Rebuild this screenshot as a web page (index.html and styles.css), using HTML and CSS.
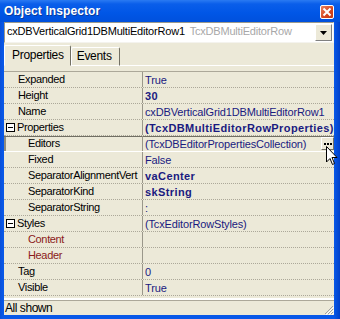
FILE: index.html
```html
<!DOCTYPE html>
<html lang="en">
<head>
    <meta charset="UTF-8">
    <title>Object Inspector</title>
    <link rel="stylesheet" href="styles.css">
</head>
<body>

<div class="window">
    <div class="titlebar">
        <span class="title">Object Inspector</span>
        <span class="close-btn">
            <svg width="10" height="10" viewBox="0 0 10 10"><path d="M1.5 1.5 L8.5 8.5 M8.5 1.5 L1.5 8.5" stroke="#fff" stroke-width="2"/></svg>
        </span>
    </div>

    <div class="client">
        <div class="combo">
            <div class="combo-field">
                <span class="obj-name">cxDBVerticalGrid1DBMultiEditorRow1</span>
                <span class="obj-type">TcxDBMultiEditorRow</span>
            </div>
            <div class="combo-btn">
                <svg width="7" height="4" viewBox="0 0 7 4"><path d="M0 0 H7 L3.5 4 Z" fill="#000"/></svg>
            </div>
        </div>

        <div class="tabs">
            <div class="tab active">Properties</div>
            <div class="tab">Events</div>
            <div class="tab-rest"></div>
        </div>

        <div class="sheet">
            <div class="grid">
                <div class="row"><div class="name lvl1">Expanded</div><div class="value">True</div></div>
                <div class="row"><div class="name lvl1">Height</div><div class="value bold">30</div></div>
                <div class="row"><div class="name lvl1">Name</div><div class="value">cxDBVerticalGrid1DBMultiEditorRow1</div></div>
                <div class="row"><div class="name cat"><span class="expander"></span>Properties</div><div class="value bold">(TcxDBMultiEditorRowProperties)</div></div>
                <div class="row focused">
                    <div class="name lvl2">Editors</div>
                    <div class="value">(TcxDBEditorPropertiesCollection)<span class="ellipsis-btn"><i></i><i></i><i></i></span></div>
                    <svg class="cursor" width="12" height="20" viewBox="0 0 12 20">
                        <path d="M0.5 0.5 V16 L4 12.5 L6.5 18.5 L8.5 17.5 L6 11.5 H11 Z" fill="#fff" stroke="#000" stroke-width="1"/>
                    </svg>
                </div>
                <div class="row"><div class="name lvl2">Fixed</div><div class="value">False</div></div>
                <div class="row"><div class="name lvl2">SeparatorAlignmentVert</div><div class="value bold">vaCenter</div></div>
                <div class="row"><div class="name lvl2">SeparatorKind</div><div class="value bold">skString</div></div>
                <div class="row"><div class="name lvl2">SeparatorString</div><div class="value">:</div></div>
                <div class="row"><div class="name cat"><span class="expander"></span>Styles</div><div class="value">(TcxEditorRowStyles)</div></div>
                <div class="row"><div class="name lvl2 style-name">Content</div><div class="value"></div></div>
                <div class="row"><div class="name lvl2 style-name">Header</div><div class="value"></div></div>
                <div class="row"><div class="name lvl1">Tag</div><div class="value">0</div></div>
                <div class="row"><div class="name lvl1">Visible</div><div class="value">True</div></div>
            </div>
        </div>

        <div class="status">
            <span>All shown</span>
            <svg class="grip" width="10" height="10" viewBox="0 0 10 10">
                <path d="M9 1 L1 9 M9 4 L4 9 M9 7 L7 9" stroke="#a0a0a0" stroke-width="1"/>
                <path d="M10 2 L2 10 M10 5 L5 10 M10 8 L8 10" stroke="#fff" stroke-width="1"/>
            </svg>
        </div>
    </div>
</div>

</body>
</html>
```

FILE: styles.css
```css
body {
    margin: 0;
    font-family: 'Liberation Sans', Arial, sans-serif;
    font-size: 11px;
    background-color: #0054e3;
}

.window {
    width: 340px;
    height: 319px;
    display: flex;
    flex-direction: column;
    background: linear-gradient(to right, #0a4fd8, #0858e8 3px, #0858e8 334px, #0040c8);
}

.titlebar {
    height: 22px;
    display: flex;
    align-items: center;
    justify-content: space-between;
    padding: 0 6px 0 4px;
    background: linear-gradient(#2a7af2 0, #0a5eea 4px, #0056e6 60%, #0050dc 100%);
}

.title {
    color: #fff;
    font-weight: bold;
    font-size: 12px;
    letter-spacing: 0.1px;
    text-shadow: 1px 1px 0 #0a3a9e;
}

.close-btn {
    width: 12px;
    height: 12px;
    border: 1px solid #fff;
    border-radius: 2px;
    background: linear-gradient(135deg, #e8805e, #d5451e 60%, #c23a17);
    display: flex;
    align-items: center;
    justify-content: center;
    margin-top: 1px;
}

.client {
    flex: 1;
    margin: 0 6px 4px 4px;
    background-color: #ece9d8;
    display: flex;
    flex-direction: column;
}

/* object selector */
.combo {
    height: 19px;
    display: flex;
    background-color: #fff;
    border: 1px solid;
    border-color: #9c9a8c #f4f3ee #f4f3ee #9c9a8c;
}

.combo-field {
    flex: 1;
    padding: 2px 0 0 2px;
    white-space: nowrap;
    overflow: hidden;
    letter-spacing: -0.2px;
}

.obj-name {
    color: #000;
}

.obj-type {
    color: #a8a8a8;
    margin-left: 2px;
}

.combo-btn {
    width: 15px;
    margin: 1px;
    background-color: #ece9d8;
    border: 1px solid;
    border-color: #fff #808080 #808080 #fff;
    display: flex;
    align-items: center;
    justify-content: center;
}

/* tabs */
.tabs {
    display: flex;
    align-items: flex-end;
    height: 21px;
    margin-top: 2px;
}

.tab {
    height: 17px;
    padding: 0 7px 0 5px;
    line-height: 17px;
    font-size: 12px;
    letter-spacing: -0.3px;
    border: 1px solid;
    border-color: #fff #716f64 #fff #fff;
    border-radius: 2px 2px 0 0;
}

.tab.active {
    height: 19px;
    line-height: 19px;
    padding: 0 6px 0 7px;
    border-bottom-color: #ece9d8;
}

.tab-rest {
    flex: 1;
    border-bottom: 1px solid #fff;
}

.sheet {
    padding-top: 5px;
}

/* property grid */
.grid {
    border-top: 1px solid #aca899;
}

.row {
    display: flex;
    height: 15px;
    border-bottom: 1px dotted #aca899;
    position: relative;
}

.name {
    width: 138px;
    border-right: 1px solid #9a978a;
    line-height: 15px;
    white-space: nowrap;
    overflow: hidden;
    color: #000;
    letter-spacing: -0.35px;
}

.lvl1 {
    padding-left: 14px;
    width: 124px;
}

.lvl2 {
    padding-left: 24px;
    width: 114px;
}

.cat {
    padding-left: 2px;
    width: 136px;
    display: flex;
    align-items: center;
}

.expander {
    width: 7px;
    height: 7px;
    border: 1px solid #000;
    margin-right: 2px;
    position: relative;
    background-color: #fff;
}

.expander::after {
    content: '';
    position: absolute;
    left: 1px;
    top: 3px;
    width: 5px;
    height: 1px;
    background-color: #000;
}

.style-name {
    color: #8b1a1a;
}

.value {
    flex: 1;
    display: flex;
    align-items: center;
    padding-left: 2px;
    color: #1a1a80;
    white-space: nowrap;
    letter-spacing: -0.15px;
}

.value.bold {
    font-weight: bold;
    letter-spacing: 0.4px;
}

.focused {
    box-shadow: inset 0 1px 0 #716f64, inset 2px 0 0 #8f8c7e;
    border-bottom: 1px solid #fff;
}

.ellipsis-btn {
    margin-left: auto;
    width: 11px;
    height: 11px;
    border: 1px solid;
    border-color: #fff #716f64 #716f64 #fff;
    background-color: #ece9d8;
    display: flex;
    align-items: center;
    justify-content: center;
    gap: 1px;
}

.ellipsis-btn i {
    width: 2px;
    height: 2px;
    background-color: #000;
}

.cursor {
    position: absolute;
    left: 322px;
    top: 10px;
    z-index: 2;
}

/* status bar */
.status {
    margin-top: auto;
    height: 14px;
    border-top: 1px solid #aca899;
    box-shadow: 0 -2px 0 #fff;
    padding-left: 1px;
    display: flex;
    justify-content: space-between;
    align-items: center;
    font-size: 12px;
    letter-spacing: -0.45px;
}

.grip {
    align-self: flex-end;
}
```
